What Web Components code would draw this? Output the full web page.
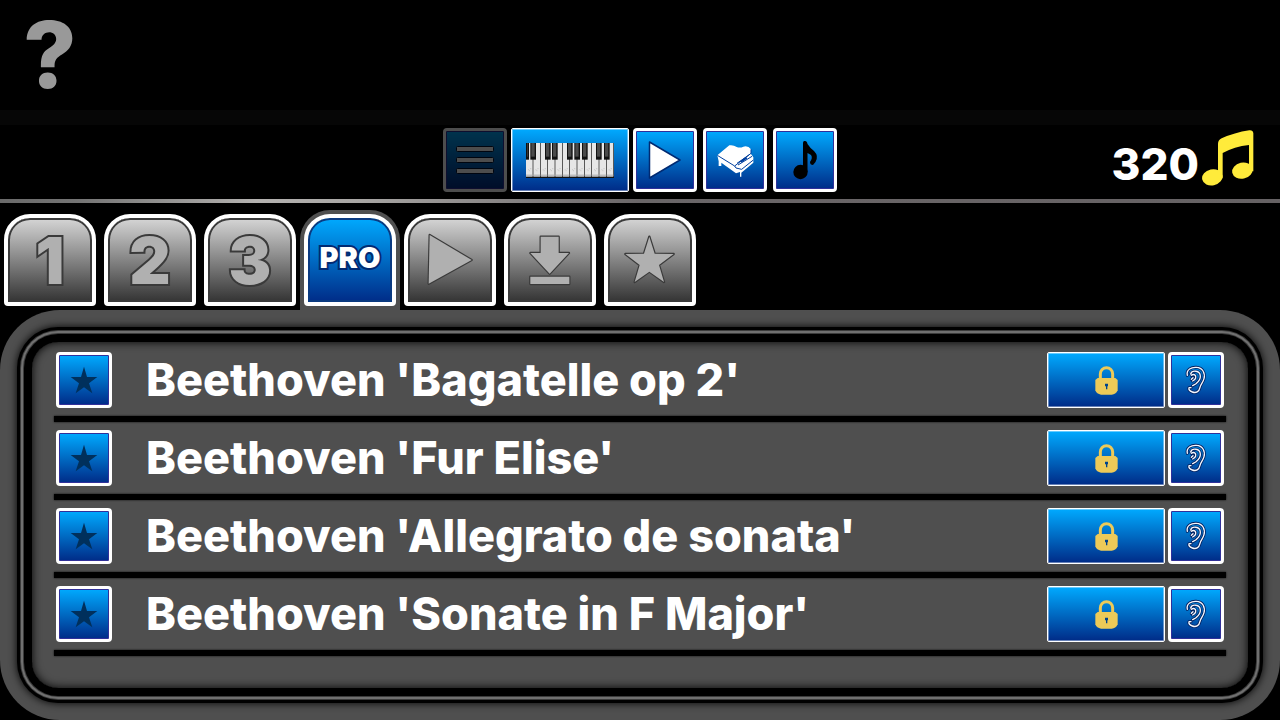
<!DOCTYPE html>
<html lang="en">
<head>
<meta charset="utf-8">
<meta name="viewport" content="width=device-width, initial-scale=1">
<title>Piano Songs</title>
<style>
    html, body { margin: 0; background: #000; }
    body { min-height: 100vh; display: flex; flex-direction: column; font-family: Inter, "Open Sans", sans-serif; color: #fff; }
    song-panel { flex: 1; }
</style>
</head>
<body>
<top-bar></top-bar>
<tool-bar score="320">
    <blue-button icon="menu" label="Menu" large disabled></blue-button>
    <blue-button icon="keys" label="Keyboard" large wide></blue-button>
    <blue-button icon="play" label="Play" large></blue-button>
    <blue-button icon="piano" label="Piano" large></blue-button>
    <blue-button icon="note" label="Notes" large></blue-button>
</tool-bar>
<tab-strip>
    <level-tab label="Level 1">1</level-tab>
    <level-tab label="Level 2">2</level-tab>
    <level-tab label="Level 3">3</level-tab>
    <level-tab label="Pro" active>PRO</level-tab>
    <level-tab label="Recordings" icon="tabPlay"></level-tab>
    <level-tab label="Downloads" icon="tabDownload"></level-tab>
    <level-tab label="Favourites" icon="tabStar"></level-tab>
</tab-strip>
<song-panel>
    <song-row>Beethoven 'Bagatelle op 2'</song-row>
    <song-row>Beethoven 'Fur Elise'</song-row>
    <song-row>Beethoven 'Allegrato de sonata'</song-row>
    <song-row>Beethoven 'Sonate in F Major'</song-row>
</song-panel>

<script>
// --- Icons ---
const svg = (w, h, box, body) => `<svg width="${w}" height="${h}" viewBox="${box}" aria-hidden="true">${body}</svg>`;

// 12 white keys, black keys given as [x, width]
function keyboardArt() {
    const blacks = [[0, 9], [13, 17], [57, 17], [78, 17], [123, 17], [145, 17], [168, 17], [210, 17], [234, 17]];
    let out = '<rect width="264" height="105" fill="#111"/>';
    for (let i = 0; i < 12; i++) {
        const x = i * 22;
        out += `<rect x="${x}" width="20" height="101" fill="#e6e6e6"/><rect x="${x}" y="95" width="20" height="3" fill="#aaa"/>`;
        out += `<path d="M${x + 6} 80h3m3-3h4m-7 6h3" stroke="#bbb" stroke-width="2"/>`;
    }
    blacks.forEach(([x, w]) => {
        out += `<rect x="${x}" width="${w}" height="50" fill="#111"/><rect x="${x + 3}" width="${w - 7}" height="41" fill="#4a4a4a"/>`;
    });
    return out;
}

// outer ear, then the inner folds
const EAR = '<path d="M7 31C3 13 20 6 34 7 53 8 61 24 57 41 54 53 47 57 45 67 42 81 33 85 22 81 13 78 10 75 12 68H18"/><path d="M17 27C21 14 45 16 46 33 47 45 40 50 32 57L23 62M19 31C27 25 34 31 32 39 31 44 27 46 23 48M24 38 19 43"/>';

const ICONS = {
    menu: svg(38, 28, '0 0 38 28', '<g fill="#fff" stroke="#001233"><rect x=".5" y=".5" width="37" height="5" rx="1"/><rect x=".5" y="11.500" width="37" height="5" rx="1"/><rect x=".5" y="22.500" width="37" height="5" rx="1"/></g>'),
    keys: svg(88, 35, '0 0 264 105', keyboardArt()),
    play: svg(64, 64, '0 0 64 64', '<path d="M16.500 14 47 32 16.500 50Z" fill="#fff" stroke="#002a72" stroke-width="1.500" stroke-linejoin="round"/>'),
    piano: svg(38, 33, '0 0 114 99', `
        <path d="M4 34 40 4Q52 2 62 9 72 13 82 8 96 4 105 16V30L112 40V56L76 86V98H72V84L60 88 16 56V66H8V52Z" fill="#fff"/>
        <path d="M4 34 56 66 105 28V16M56 66 60 72M63 58 100 32M66 63 108 37M60 72 77 76 112 48" fill="none" stroke="#003f9e" stroke-width="3"/>
        <path d="M74 54 92 41" stroke="#003f9e" stroke-width="6"/>`),
    note: svg(64, 64, '0 0 64 64', '<circle cx="27.500" cy="44" r="7.200"/><path d="M30 15Q30 12.500 32 13 34 13 34.500 16 37 20 41 23 46 28 42.500 34L40 37Q37 37 37 34 40 30 38 27L34.500 25V44H30Z"/>'),
    star: svg(28, 28, '0 0 84 84', '<path d="M42 2 51 33H82L57 52 67 82 42 64 17 82 27 52 2 33H33Z" fill="#00305c"/>'),
    lock: svg(23, 29, '0 0 69 87', '<path d="M16 40V24a18.500 19 0 0 1 37 0V40" fill="none" stroke="#edca58" stroke-width="9"/><path d="M8 36H61L68 42V73Q62 86 50 86H18Q5 84 1 73V42Z" fill="#edca58"/><path d="M30 53H39V61H37V70H33V61H30Z" fill="#00438c"/>'),
    ear: svg(22, 30, '0 0 66 90', `
        <g fill="none" stroke-linecap="round" stroke-linejoin="round">
            <g stroke="#03205f" stroke-width="9">${EAR}</g>
            <g stroke="#f4f8ff" stroke-width="4">${EAR}</g>
        </g>`),
    coins: svg(54, 56, '0 0 162 168', '<g fill="#ffeb3b"><ellipse cx="34" cy="142" rx="31" ry="24" transform="rotate(-12 34 142)"/><ellipse cx="124" cy="122" rx="31" ry="24" transform="rotate(-12 124 122)"/><path d="M51 42Q51 30 62 25 100 8 145 1 156 0 157 10V124H144V45Q100 50 65 69V145H51Z"/></g>'),
    tabPlay: svg(92, 92, '0 0 276 276', '<path d="M77 63 203 138 74 209Z"/>'),
    tabDownload: svg(92, 92, '0 0 276 276', '<path d="M110 68H164V117H195L137 179 79 117H110ZM79 188H196V210H79Z"/>'),
    tabStar: svg(92, 92, '0 0 276 276', '<path d="M136 68 152 119 209 120 165 153 180 204 136 173 92 204 107 153 64 120 120 119Z"/>')
};

// --- Blue square / wide button ---
class BlueButton extends HTMLElement {
    constructor() {
        super();
        this.attachShadow({ mode: 'open' });
    }

    connectedCallback() {
        this.shadowRoot.innerHTML = `
            <style>
                :host { display: block; flex: none; --size: 56px; margin: 0 2px; }
                :host([large]) { --size: 64px; margin: 0 3px; }
                :host([wide]) { margin: 0 1px; }
                button { box-sizing: border-box; width: var(--size); height: var(--size); padding: 0; display: flex; align-items: center; justify-content: center; border: 3px solid #fff; border-radius: 4px; background: linear-gradient(#00aaff, #002b87) padding-box; box-shadow: inset 0 0 0 1px #30309a; cursor: pointer; }
                :host([wide]) button { width: 118px; border-width: 1px; border-radius: 2px; box-shadow: inset 0 0 0 1px rgba(255,255,255,.4); }
                button:disabled { opacity: .3; cursor: default; }
                svg { display: block; flex: none; }
            </style>
            <button aria-label="${this.getAttribute('label')}" ${this.hasAttribute('disabled') ? 'disabled' : ''}>${ICONS[this.getAttribute('icon')]}</button>
        `;
    }
}
customElements.define('blue-button', BlueButton);

// --- Help bar ---
class TopBar extends HTMLElement {
    connectedCallback() {
        this.attachShadow({ mode: 'open' }).innerHTML = `
            <style>
                :host { display: flex; height: 110px; border-bottom: 15px solid #060606; }
                button { width: 100px; padding: 0; border: 0; background: none; color: #999; font: 800 92px/110px Inter, sans-serif; cursor: pointer; }
            </style>
            <button title="Help">?</button>
        `;
    }
}
customElements.define('top-bar', TopBar);

// --- Toolbar with score ---
class ToolBar extends HTMLElement {
    connectedCallback() {
        this.attachShadow({ mode: 'open' }).innerHTML = `
            <style>
                :host { display: grid; grid-template-columns: 1fr auto 1fr; grid-template-rows: 70px 8px; align-items: center; }
                .tools { grid-column: 2; display: flex; }
                .score { display: flex; justify-content: flex-end; align-items: center; gap: 2px; padding-right: 25px; font-size: 44px; font-weight: 800; line-height: 56px; }
                .score span { padding-top: 8px; }
                .line { grid-column: 1 / -1; align-self: end; height: 4px; background: linear-gradient(90deg, #6a6a6a, #747474 6%, #b4b2b0 20%, #a8a6a4 28%, #6a6668 50%, #666264); }
                svg { display: block; margin-bottom: 4px; }
            </style>
            <div class="tools"><slot></slot></div>
            <div class="score"><span>${this.getAttribute('score')}</span>${ICONS.coins}</div>
            <div class="line"></div>
        `;
    }
}
customElements.define('tool-bar', ToolBar);

// --- Tabs ---
class TabStrip extends HTMLElement {
    connectedCallback() {
        this.attachShadow({ mode: 'open' }).innerHTML = `
            <style>:host { display: flex; padding-top: 7px; }</style>
            <slot></slot>
        `;
    }
}
customElements.define('tab-strip', TabStrip);

class LevelTab extends HTMLElement {
    connectedCallback() {
        const icon = this.getAttribute('icon');
        this.attachShadow({ mode: 'open' }).innerHTML = `
            <style>
                :host { display: block; padding: 4px; border-radius: 30px 30px 0 0; }
                :host([active]) { background: #4f4f4f; }
                button { box-sizing: border-box; width: 92px; height: 92px; padding: 0; display: flex; align-items: center; justify-content: center; border: 4px solid #fff; border-radius: 26px 26px 4px 4px; background: linear-gradient(#d6d6d6, #333) padding-box; box-shadow: inset 0 0 0 2px #3a3a3a; color: #b0b0b0; font: 900 64px/80px Inter, sans-serif; -webkit-text-stroke: 4px #3a3a3a; paint-order: stroke fill; cursor: pointer; }
                span { padding-top: 2px; }
                :host([active]) button { background: linear-gradient(#00aaff, #002b87) padding-box; box-shadow: inset 0 0 0 2px #0a3a80; color: #fff; font-size: 29px; -webkit-text-stroke-color: #012a72; padding-bottom: 6px; }
                svg { flex: none; fill: #b0b0b0; stroke: #3a3a3a; stroke-width: 7; stroke-linejoin: round; }
            </style>
            <button aria-label="${this.getAttribute('label')}">${icon ? ICONS[icon] : '<span><slot></slot></span>'}</button>
        `;
    }
}
customElements.define('level-tab', LevelTab);

// --- Song list ---
class SongPanel extends HTMLElement {
    connectedCallback() {
        this.attachShadow({ mode: 'open' }).innerHTML = `
            <style>
                :host { display: flex; padding: 32px; background: #4f4f4f; border-radius: 60px; }
                .list { flex: 1; padding: 10px 22px 24px; border-radius: 26px; box-shadow: inset 0 0 10px #000, 0 0 0 8px #000, 0 0 0 9px #3c3c3c, 0 0 0 11px #707070, 0 0 0 12px #3c3c3c, 0 0 0 15px #000, 0 0 8px 15px #000; }
            </style>
            <div class="list"><slot></slot></div>
        `;
    }
}
customElements.define('song-panel', SongPanel);

class SongRow extends HTMLElement {
    connectedCallback() {
        this.attachShadow({ mode: 'open' }).innerHTML = `
            <style>
                :host { display: block; padding-bottom: 8px; }
                .row { display: flex; align-items: center; padding-bottom: 8px; }
                .title { flex: 1; padding-left: 32px; font-size: 45px; font-weight: 800; line-height: 56px; white-space: nowrap; }
                .rule { height: 6px; background: #000; box-shadow: 0 0 2px #000; }
            </style>
            <div class="row">
                <blue-button icon="star" label="Favourite"></blue-button>
                <div class="title"><slot></slot></div>
                <blue-button icon="lock" label="Unlock" wide></blue-button>
                <blue-button icon="ear" label="Listen"></blue-button>
            </div>
            <div class="rule"></div>
        `;
    }
}
customElements.define('song-row', SongRow);
</script>
</body>
</html>
